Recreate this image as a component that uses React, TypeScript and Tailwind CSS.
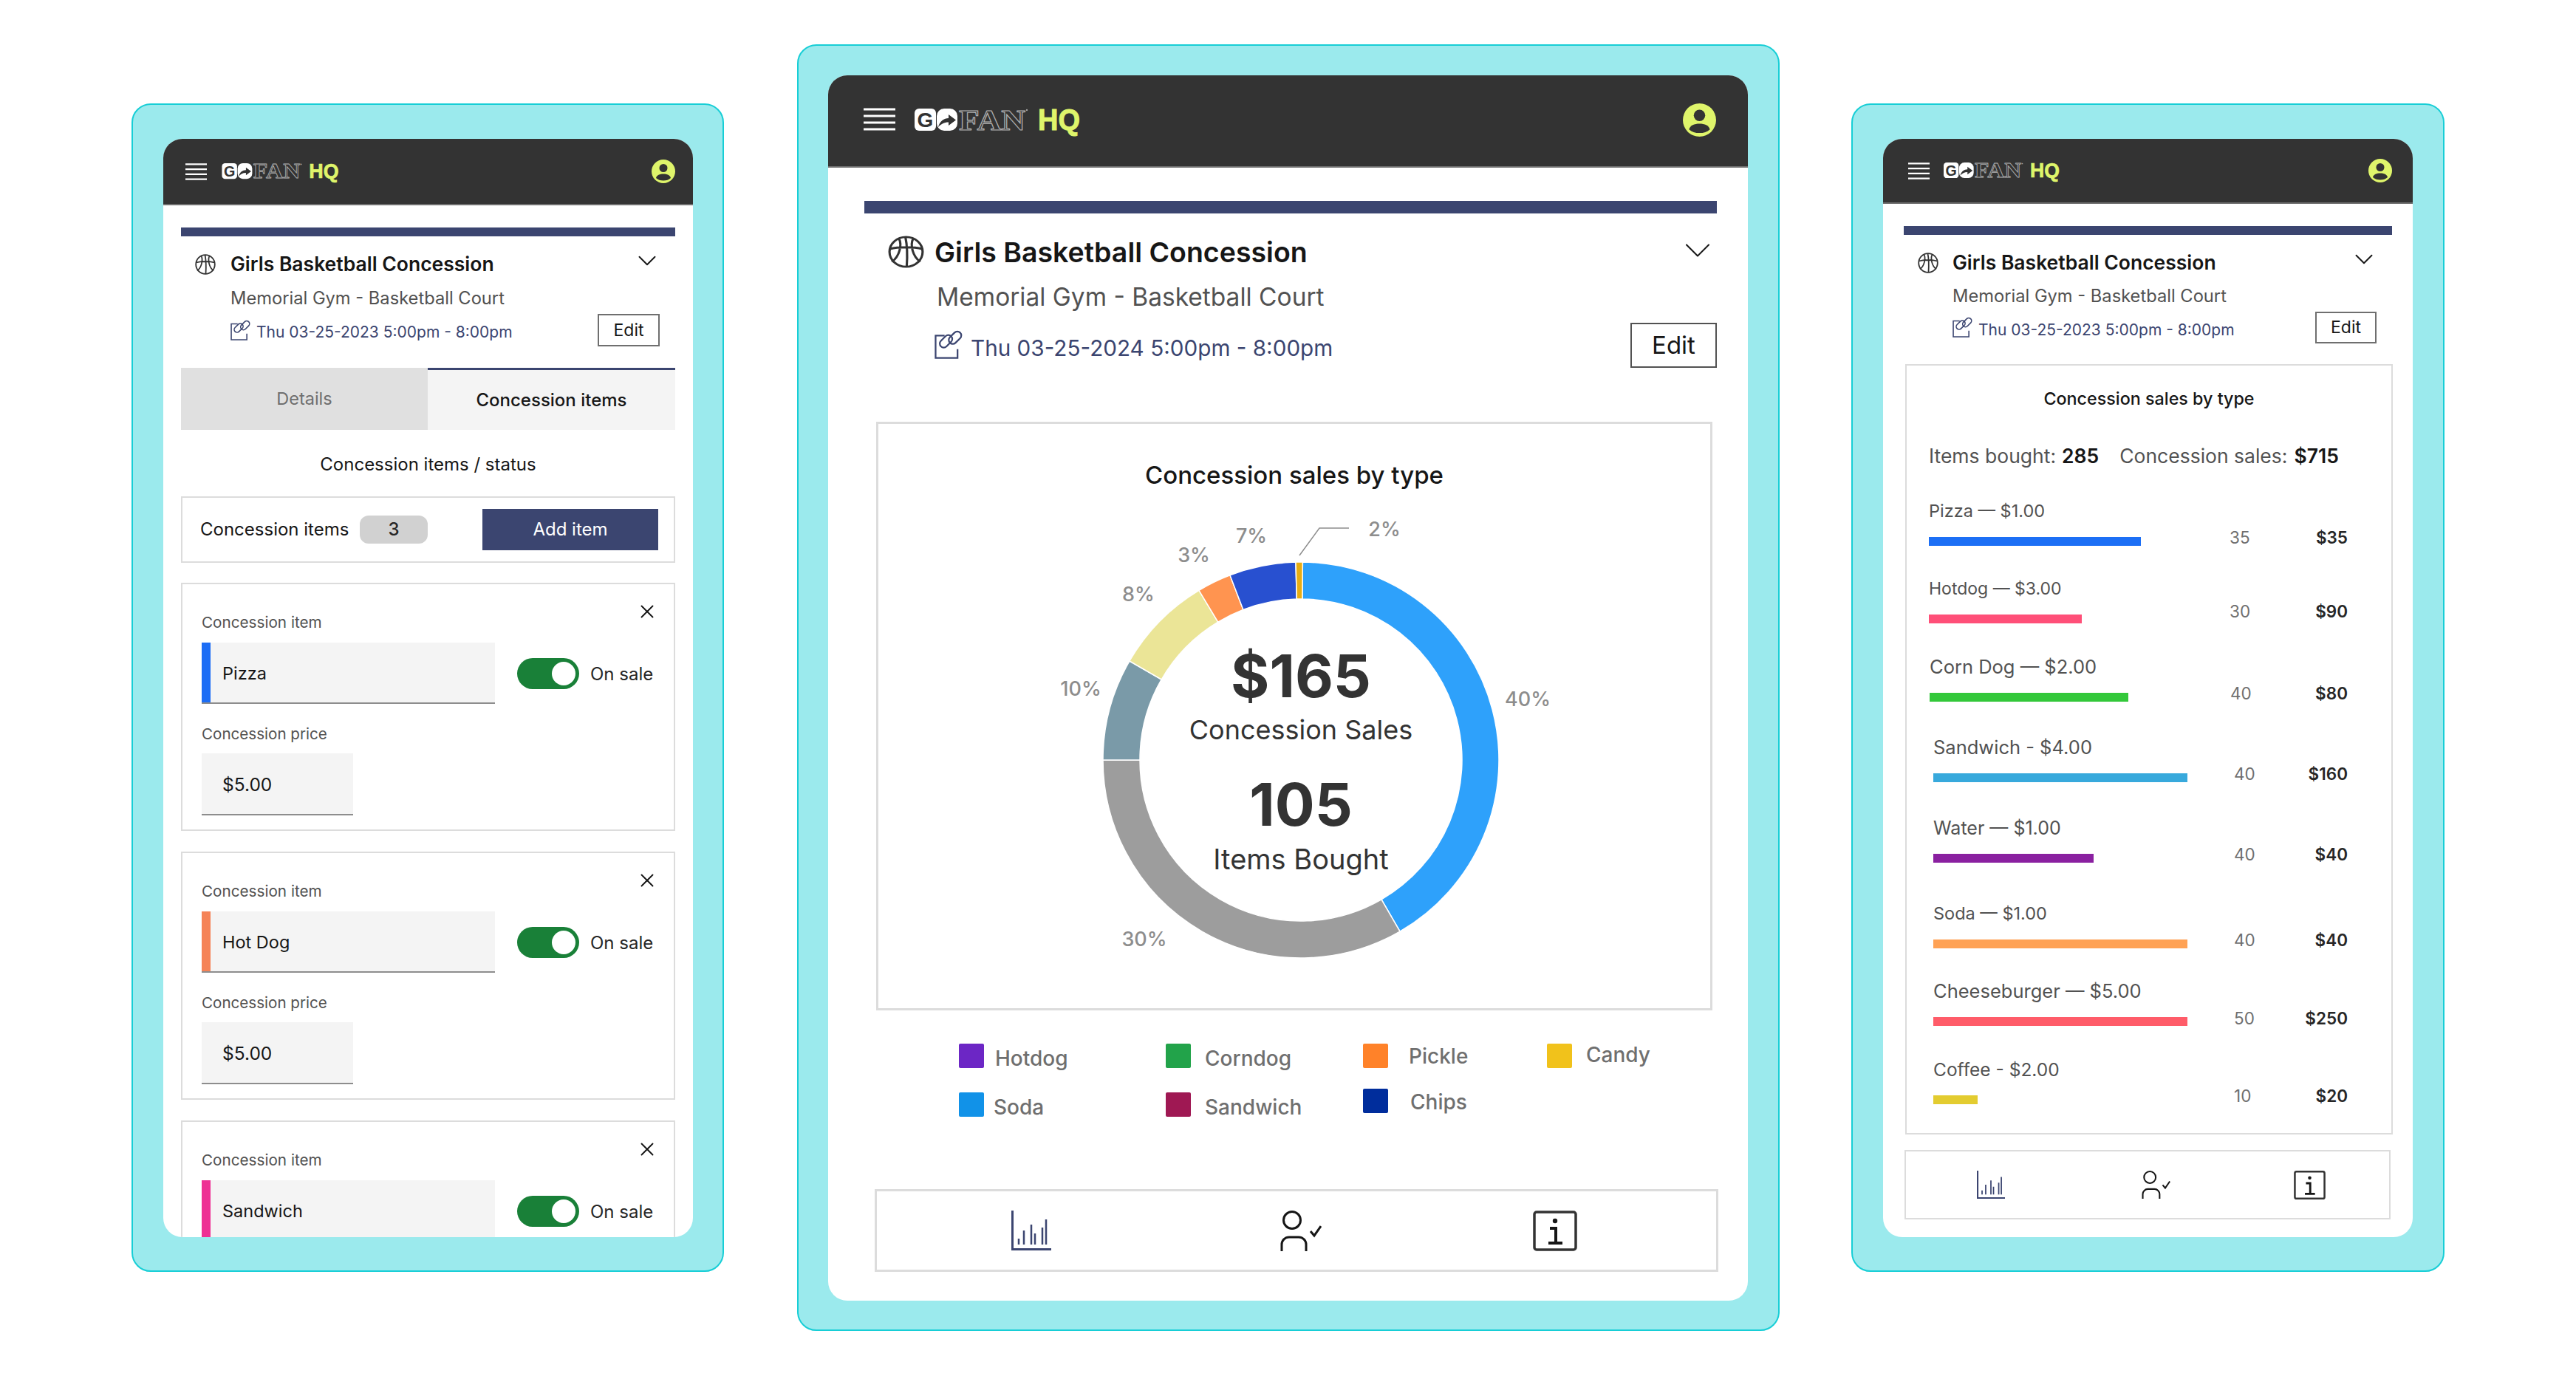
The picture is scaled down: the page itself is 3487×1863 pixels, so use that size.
import React from 'react';
import { X, ChevronDown } from 'lucide-react';

const NAVY = '#3b4570';

const Hamburger = ({ className }: { className: string }) => (
  <svg viewBox="0 0 43 31" preserveAspectRatio="none" className={className} stroke="#fff" strokeWidth="3">
    <path d="M0 2H43M0 11H43M0 20H43M0 29H43" />
  </svg>
);

const Logo = ({ className }: { className: string }) => (
  <svg viewBox="0 0 224 34" className={`overflow-visible ${className}`}>
    <rect x="0" y="0" width="29" height="30" rx="6" fill="#fff" />
    <text x="14.5" y="25" textAnchor="middle" fontFamily="Liberation Sans" fontWeight="700" fontSize="28" fill="#333">G</text>
    <rect x="30" y="0" width="28" height="30" rx="10" fill="#fff" />
    <path d="M32 25C34 17 40 13 46 13V8L56 15.5L46 23V18.5C40 18.5 36 21 32 25Z" fill="#333" />
    <text x="60" y="29" fontFamily="Liberation Serif" fontWeight="700" fontSize="41" textLength="90" lengthAdjust="spacingAndGlyphs" fill="none" stroke="#b4b4b4" strokeWidth="1.1">FAN</text>
    <circle cx="152" cy="2" r="1.2" fill="#a0a0a0" />
    <text x="167" y="29" fontFamily="Liberation Sans" fontWeight="700" fontSize="40" textLength="57" lengthAdjust="spacingAndGlyphs" fill="#dff56b" stroke="#dff56b" strokeWidth="1">HQ</text>
  </svg>
);

const Avatar = ({ className }: { className: string }) => (
  <svg viewBox="0 0 32 32" className={className}>
    <circle cx="16" cy="16" r="16" fill="#dff56b" />
    <circle cx="16" cy="11.5" r="5.5" fill="#333" />
    <path d="M6 25C7 21 11 19.5 16 19.5S25 21 26 25C23.500 27.500 20 28.500 16 28.500S8.500 27.500 6 25Z" fill="#333" />
  </svg>
);

const Ball = ({ className }: { className: string }) => (
  <svg viewBox="0 0 28 28" preserveAspectRatio="none" fill="none" stroke="#333" strokeWidth="1.800" className={className}>
    <circle cx="14" cy="14" r="12.800" />
    <path d="M13.500 1.200C15 9 15 19 14.500 26.800M1.500 11.500C8 9.500 20 9.500 26.500 11.500M8.500 2.500C11 8 9 18 3 22.500M19.500 2.500C17 8 19 18 25 22.500" />
  </svg>
);

const DateIcon = ({ className }: { className: string }) => (
  <svg viewBox="0 0 39 38" fill="none" stroke={NAVY} strokeWidth="2.300" className={`overflow-visible ${className}`}>
    <path d="M14 6H1.500V37H32V25" />
    <rect x="10.500" y="4" width="11" height="20" rx="5.500" transform="rotate(45 16 14)" />
    <rect x="23" y="-1" width="11" height="20" rx="5.500" transform="rotate(45 28.500 9)" />
  </svg>
);

const ChartIcon = ({ className }: { className: string }) => (
  <svg viewBox="0 0 54 54" fill="none" stroke={NAVY} strokeWidth="2.500" className={className}>
    <path d="M1.500 0V52.500H54" strokeWidth="3" />
    <path d="M10 46V38M17 46V27M27 46V19M32 46V31M42 46V23M47 46V12" />
  </svg>
);

const PersonIcon = ({ className }: { className: string }) => (
  <svg viewBox="0 0 56 55" fill="none" stroke="#161616" strokeWidth="3" className={className}>
    <circle cx="16" cy="13" r="11.500" />
    <path d="M2 55V46A10 10 0 0 1 12 36H25A10 10 0 0 1 35 46V55" />
    <path d="M41 28L46 34L55 21" />
  </svg>
);

const InfoIcon = ({ className }: { className: string }) => (
  <svg viewBox="0 0 60 55" fill="none" stroke="#333" strokeWidth="3.500" className={className}>
    <rect x="2" y="2" width="56" height="51" rx="3" />
    <circle cx="30" cy="14" r="3.200" fill="#161616" stroke="none" />
    <path d="M23 24H31V44M21 44H40" stroke="#161616" strokeWidth="4" />
  </svg>
);

const polar = (r: number, deg: number) => {
  const a = ((deg - 90) * Math.PI) / 180;
  return `${(321 + r * Math.cos(a)).toFixed(2)} ${(339 + r * Math.sin(a)).toFixed(2)}`;
};

const arc = (from: number, to: number) => {
  const big = to - from > 180 ? 1 : 0;
  return `M${polar(268, from)}A268 268 0 ${big} 1 ${polar(268, to)}L${polar(218, to)}A218 218 0 ${big} 0 ${polar(218, from)}Z`;
};

const slices = [
  { from: 0.5, to: 150, color: '#2ea1fb' },
  { from: 150, to: 270, color: '#9d9d9d' },
  { from: 270, to: 300, color: '#7a9aa8' },
  { from: 300, to: 329, color: '#ebe597' },
  { from: 329, to: 339, color: '#ff9450' },
  { from: 339, to: 358.500, color: '#2850d0' },
  { from: 358.500, to: 360.500, color: '#e8ad14' },
];

const donutLabels = [
  { text: '40%', x: 628, y: 266 },
  { text: '2%', x: 434, y: 36 },
  { text: '7%', x: 254, y: 45 },
  { text: '3%', x: 176, y: 71 },
  { text: '8%', x: 101, y: 124 },
  { text: '10%', x: 23, y: 252 },
  { text: '30%', x: 109, y: 591 },
];

const Donut = () => (
  <div className="relative ml-[251px] mt-[25px] h-[630px] w-[660px]">
    <svg viewBox="0 0 660 630" className="h-[630px] w-[660px] overflow-visible">
      {slices.map((s) => (
        <path key={s.color} d={arc(s.from, s.to)} fill={s.color} stroke="#fff" strokeWidth="1.500" />
      ))}
      <path d="M319 62L346 25H386" fill="none" stroke="#8d8d8d" strokeWidth="1.500" />
      {donutLabels.map((l) => (
        <text key={l.text} x={l.x} y={l.y} textAnchor="middle" fontSize="27" fontWeight="500" fill="#8d8d8d">
          {l.text}
        </text>
      ))}
    </svg>
    <div className="absolute left-0 top-[185px] flex w-[642px] flex-col items-center text-[#333]">
      <div className="h-[80px] text-[80px] font-bold leading-[80px]">$165</div>
      <div className="mt-[9px] h-[48px] text-[36px] leading-[48px]">Concession Sales</div>
      <div className="mt-[37px] h-[80px] text-[80px] font-bold leading-[80px]">105</div>
      <div className="mt-[10px] h-[48px] text-[38px] leading-[48px]">Items Bought</div>
    </div>
  </div>
);

const legendCols = [
  {
    width: 'w-[280px]',
    gap: 'gap-[33px]',
    items: [
      { label: 'Hotdog', color: 'bg-[#6c26c5]', text: 'ml-[15px] pt-[7px]' },
      { label: 'Soda', color: 'bg-[#1192e8]', text: 'ml-[13px] pt-[7px]' },
    ],
  },
  {
    width: 'w-[267px]',
    gap: 'gap-[33px]',
    items: [
      { label: 'Corndog', color: 'bg-[#22a34a]', text: 'ml-[19px] pt-[7px]' },
      { label: 'Sandwich', color: 'bg-[#9f1853]', text: 'ml-[19px] pt-[7px]' },
    ],
  },
  {
    width: 'w-[249px]',
    gap: 'gap-[28px]',
    items: [
      { label: 'Pickle', color: 'bg-[#ff8229]', text: 'ml-[28px] pt-[1px]' },
      { label: 'Chips', color: 'bg-[#002d9c]', text: 'ml-[30px] pt-[3px]' },
    ],
  },
  {
    width: 'w-[140px]',
    gap: 'gap-[33px]',
    items: [{ label: 'Candy', color: 'bg-[#f1c21b]', text: 'ml-[19px] pb-[3px]' }],
  },
];

const CenterPanel = () => (
  <div className="h-[1659px] w-[1245px] overflow-hidden rounded-[26px] bg-white">
    <div className="flex h-[125px] items-center border-b-2 border-[#6f6f6f] bg-[#333] pl-[48px] pr-[43px]">
      <Hamburger className="mb-[4px] h-[31px] w-[43px]" />
      <Logo className="ml-[26px] h-[34px] w-[224px]" />
      <Avatar className="ml-auto mb-[2px] h-[45px] w-[45px]" />
    </div>
    <div className="pl-[49px] pr-[42px]">
      <div className="mt-[45px] h-[17px] bg-[#3b4570]" />
      <div className="flex pl-[32px]">
        <div className="w-[63px] shrink-0 pt-[30px]">
          <Ball className="h-[44px] w-[49px]" />
        </div>
        <div className="flex-1">
          <div className="mt-[31px] flex h-[44px] items-start justify-between">
            <div className="text-[37.500px] font-semibold leading-[44px] text-[#161616]">Girls Basketball Concession</div>
            <ChevronDown className="mr-[-4px] mt-[-11px] h-[60px] w-[60px] text-[#161616]" strokeWidth={0.800} />
          </div>
          <div className="ml-[3px] mt-[18px] h-[40px] text-[33.500px] leading-[40px] text-[#525252]">Memorial Gym - Basketball Court</div>
          <div className="mt-[15px] flex h-[61px] items-center justify-between">
            <div className="flex items-center">
              <DateIcon className="h-[38px] w-[38px]" />
              <div className="ml-[11px] pt-[8px] text-[29.700px] text-[#3b4570]">Thu 03-25-2024 5:00pm - 8:00pm</div>
            </div>
            <div className="flex h-[61px] w-[117px] items-center justify-center border-2 border-[#525252] text-[33px] text-[#161616]">Edit</div>
          </div>
        </div>
      </div>
      <div className="ml-[16px] mt-[73px] h-[797px] w-[1132px] border-[3px] border-[#dcdcdc] pt-[47px]">
        <div className="h-[44px] text-center text-[33px] font-medium leading-[44px] text-[#161616]">Concession sales by type</div>
        <Donut />
      </div>
      <div className="ml-[128px] mt-[45px] flex">
        {legendCols.map((col) => (
          <div key={col.width} className={`flex shrink-0 flex-col ${col.width} ${col.gap}`}>
            {col.items.map((item) => (
              <div key={item.label} className="flex h-[33px] items-center">
                <div className={`h-[33px] w-[34px] shrink-0 rounded-[2px] ${item.color}`} />
                <div className={`text-[28px] font-medium text-[#6f6f6f] ${item.text}`}>{item.label}</div>
              </div>
            ))}
          </div>
        ))}
      </div>
      <div className="ml-[14px] mt-[98px] flex h-[112px] w-[1142px] items-center border-[3px] border-[#dcdcdc]">
        <ChartIcon className="ml-[182px] h-[54px] w-[54px]" />
        <PersonIcon className="ml-[310px] h-[55px] w-[56px]" />
        <InfoIcon className="ml-[286px] h-[55px] w-[60px]" />
      </div>
    </div>
  </div>
);

const EventBlock = ({ date, narrow }: { date: string; narrow?: boolean }) => (
  <div className="flex pl-[19px]">
    <div className={`shrink-0 pt-[24px] ${narrow ? 'w-[47px]' : 'w-[48px]'}`}>
      <Ball className="h-[28px] w-[28px]" />
    </div>
    <div className="flex-1 pr-[21px]">
      <div className="mt-[20px] flex h-[34px] items-start justify-between">
        <div className="text-[26.500px] font-semibold leading-[34px] text-[#161616]">Girls Basketball Concession</div>
        <ChevronDown className="mr-[-4px] mt-[-8px] h-[42px] w-[42px] text-[#161616]" strokeWidth={1.100} />
      </div>
      <div className={`h-[30px] text-[23.700px] leading-[30px] text-[#525252] ${narrow ? 'mt-[14px]' : 'mt-[15px]'}`}>Memorial Gym - Basketball Court</div>
      <div className={`mt-[6px] flex items-center justify-between ${narrow ? 'h-[43px]' : 'h-[44px]'}`}>
        <div className="flex items-center">
          <DateIcon className="h-[27px] w-[27px]" />
          <div className="ml-[8px] pt-[6px] text-[21px] text-[#3b4570]">{date}</div>
        </div>
        <div className={`flex h-full items-center justify-center border-2 border-[#6f6f6f] text-[23px] text-[#161616] ${narrow ? 'w-[83px]' : 'w-[84px]'}`}>Edit</div>
      </div>
    </div>
  </div>
);

const Toggle = () => (
  <div className="ml-[30px] flex h-[42px] w-[84px] items-center justify-end rounded-full bg-[#198038] pr-[5px]">
    <div className="h-[32px] w-[32px] rounded-full bg-white" />
  </div>
);

const items = [
  { name: 'Pizza', color: 'bg-[#1c6df5]' },
  { name: 'Hot Dog', color: 'bg-[#f58357]' },
  { name: 'Sandwich', color: 'bg-[#ee3094]' },
];

const ItemCard = ({ name, color }: { name: string; color: string }) => (
  <div className="relative mt-[28px] h-[336px] border-2 border-[#dcdcdc] pl-[26px] pt-[39px]">
    <X className="absolute right-[21px] top-[22px] h-[30px] w-[30px] text-[#161616]" strokeWidth={1.500} />
    <div className="h-[26px] text-[20.700px] leading-[26px] text-[#525252]">Concession item</div>
    <div className="mt-[14px] flex h-[83px] items-center">
      <div className="flex h-[83px] w-[397px] border-b-2 border-[#8d8d8d] bg-[#f4f4f4]">
        <div className={`w-[12px] ${color}`} />
        <div className="flex items-center pl-[16px] pt-[2px] text-[23.500px] text-[#161616]">{name}</div>
      </div>
      <Toggle />
      <div className="ml-[15px] pt-[2px] text-[24px] text-[#262626]">On sale</div>
    </div>
    <div className="mt-[28px] h-[26px] text-[20.600px] leading-[26px] text-[#525252]">Concession price</div>
    <div className="mt-[13px] flex h-[84px] w-[205px] items-center border-b-2 border-[#8d8d8d] bg-[#f4f4f4] pl-[28px] pt-[2px] text-[24.500px] text-[#161616]">$5.00</div>
  </div>
);

const LeftPanel = () => (
  <div className="h-[1487px] w-[717px] overflow-hidden rounded-[26px] bg-white">
    <div className="flex h-[90px] items-center border-b-2 border-[#6f6f6f] bg-[#333] pl-[30px] pr-[24px]">
      <Hamburger className="h-[23px] w-[29px]" />
      <Logo className="ml-[20px] mt-[2px] h-[24px] w-[159px]" />
      <Avatar className="ml-auto h-[32px] w-[32px]" />
    </div>
    <div className="px-[24px]">
      <div className="mt-[30px] h-[12px] bg-[#3b4570]" />
      <EventBlock date="Thu 03-25-2023 5:00pm - 8:00pm" />
      <div className="mt-[29px] flex h-[84px]">
        <div className="flex w-[334px] items-center justify-center bg-[#e0e0e0] text-[23.500px] text-[#6f6f6f]">Details</div>
        <div className="flex flex-1 items-center justify-center border-t-[3px] border-[#3b4570] bg-[#f4f4f4] text-[24px] font-medium text-[#161616]">Concession items</div>
      </div>
      <div className="mt-[32px] h-[30px] text-center text-[24px] leading-[30px] text-[#161616]">Concession items / status</div>
      <div className="mt-[28px] flex h-[90px] items-center border-2 border-[#dcdcdc] pl-[24px] pr-[21px]">
        <div className="w-[200px] whitespace-nowrap text-[24px] text-[#161616]">Concession items</div>
        <div className="ml-[16px] flex h-[38px] w-[92px] items-center justify-center rounded-[12px] bg-[#d1d1d1] text-[24px] font-medium text-[#262626]">3</div>
        <div className="ml-auto flex h-[56px] w-[238px] items-center justify-center bg-[#3b4570] text-[24px] text-white">Add item</div>
      </div>
      <div className="-mt-[1px]">
        {items.map((item) => (
          <ItemCard key={item.name} name={item.name} color={item.color} />
        ))}
      </div>
    </div>
  </div>
);

const salesRows = [
  { label: 'Pizza — $1.00', bar: 287, color: 'bg-[#1c6ff5]', qty: '35', amount: '$35', row: 'mt-[42px]', qtyPos: 'pt-[36px]', size: 'text-[23.500px]' },
  { label: 'Hotdog — $3.00', bar: 207, color: 'bg-[#ff4f78]', qty: '30', amount: '$90', row: 'mt-[44px]', qtyPos: 'pt-[31px]', size: 'text-[23px]' },
  { label: 'Corn Dog — $2.00', bar: 269, color: 'bg-[#33c83a]', qty: '40', amount: '$80', row: 'mt-[45px] pl-[1px]', qtyPos: 'pt-[36px]', size: 'text-[25.500px]' },
  { label: 'Sandwich - $4.00', bar: 344, color: 'bg-[#38a9dc]', qty: '40', amount: '$160', row: 'mt-[48px] pl-[6px]', qtyPos: 'pt-[36px]', size: 'text-[25.500px]' },
  { label: 'Water — $1.00', bar: 217, color: 'bg-[#8a20a0]', qty: '40', amount: '$40', row: 'mt-[48px] pl-[6px]', qtyPos: 'pt-[36px]', size: 'text-[25px]' },
  { label: 'Soda — $1.00', bar: 344, color: 'bg-[#ffa255]', qty: '40', amount: '$40', row: 'mt-[55px] pl-[6px]', qtyPos: 'pt-[36px]', size: 'text-[23.500px]' },
  { label: 'Cheeseburger — $5.00', bar: 344, color: 'bg-[#ff5c69]', qty: '50', amount: '$250', row: 'mt-[44px] pl-[6px]', qtyPos: 'pt-[37px]', size: 'text-[25.500px]' },
  { label: 'Coffee - $2.00', bar: 60, color: 'bg-[#e3cc30]', qty: '10', amount: '$20', row: 'mt-[45px] pl-[6px]', qtyPos: 'pt-[36px]', size: 'text-[24.500px]' },
];

const RightPanel = () => (
  <div className="h-[1487px] w-[717px] overflow-hidden rounded-[26px] bg-white">
    <div className="flex h-[88px] items-center border-b-2 border-[#6f6f6f] bg-[#333] pl-[34px] pr-[28px]">
      <Hamburger className="h-[23px] w-[29px]" />
      <Logo className="ml-[19px] mt-[2px] h-[24px] w-[157px]" />
      <Avatar className="ml-auto h-[32px] w-[32px]" />
    </div>
    <div className="px-[28px]">
      <div className="mt-[30px] h-[12px] bg-[#3b4570]" />
      <EventBlock narrow date="Thu 03-25-2023 5:00pm - 8:00pm" />
      <div className="ml-[2px] mt-[28px] h-[1043px] w-[660px] border-2 border-[#dcdcdc] pl-[30px] pr-[59px] pt-[29px]">
        <div className="-mr-[29px] h-[32px] text-center text-[23.300px] font-medium leading-[32px] text-[#161616]">Concession sales by type</div>
        <div className="mt-[44px] flex h-[36px] items-center whitespace-nowrap text-[26.500px] text-[#525252]">
          <span>Items bought:</span>
          <span className="ml-[8px] font-semibold text-[#161616]">285</span>
          <span className="ml-[28px]">Concession sales:</span>
          <span className="ml-[9px] font-semibold text-[#161616]">$715</span>
        </div>
        {salesRows.map((r) => (
          <div key={r.label} className={`flex h-[61px] ${r.row}`}>
            <div className="w-[407px] shrink-0">
              <div className={`h-[28px] leading-[28px] text-[#525252] ${r.size}`}>{r.label}</div>
              <div className={`mt-[21px] h-[12px] ${r.color}`} style={{ width: r.bar }} />
            </div>
            <div className={`text-[22.500px] leading-[28px] text-[#6f6f6f] ${r.qtyPos}`}>{r.qty}</div>
            <div className={`ml-auto text-[22.500px] font-semibold leading-[28px] text-[#262626] ${r.qtyPos}`}>{r.amount}</div>
          </div>
        ))}
      </div>
      <div className="ml-[1px] mt-[21px] flex h-[94px] w-[658px] items-center border-2 border-[#dcdcdc]">
        <ChartIcon className="ml-[96px] h-[38px] w-[38px]" />
        <PersonIcon className="ml-[185px] h-[38px] w-[39px]" />
        <InfoIcon className="ml-[167px] h-[41px] w-[43px]" />
      </div>
    </div>
  </div>
);

export default function App() {
  return (
    <div className="flex h-[1863px] w-[3487px] items-center bg-white pb-[1px] pl-[178px] font-[family-name:Inter,sans-serif]">
      <div className="h-[1582px] w-[802px] rounded-[26px] border-2 border-[#17ced6] bg-[#9beaed] pl-[41px] pt-[46px]">
        <LeftPanel />
      </div>
      <div className="ml-[99px] h-[1742px] w-[1330px] rounded-[26px] border-2 border-[#17ced6] bg-[#9beaed] pl-[40px] pt-[40px]">
        <CenterPanel />
      </div>
      <div className="ml-[97px] h-[1582px] w-[803px] rounded-[26px] border-2 border-[#17ced6] bg-[#9beaed] pl-[41px] pt-[46px]">
        <RightPanel />
      </div>
    </div>
  );
}
